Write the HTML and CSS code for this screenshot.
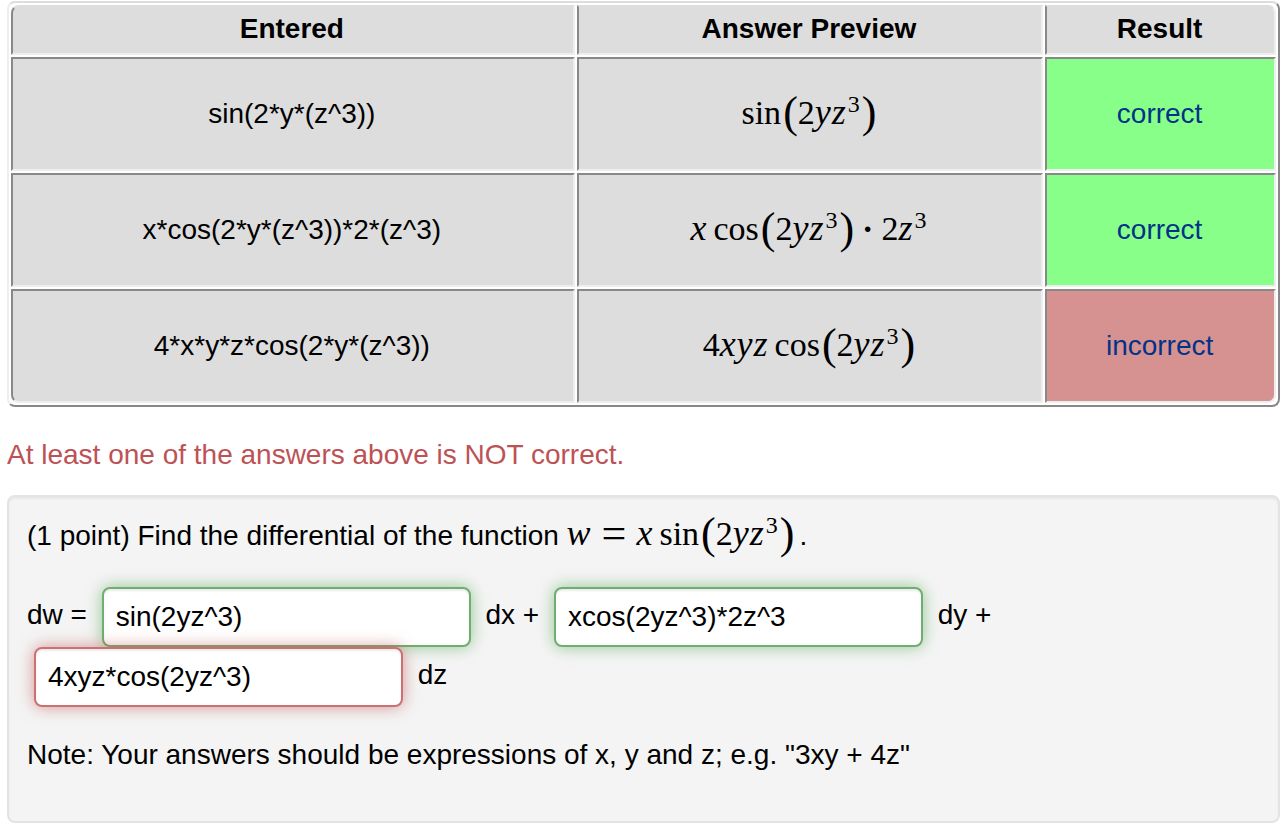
FILE: index.html
```html
<!DOCTYPE html>
<html lang="en">
<head>
<meta charset="utf-8">
<meta name="viewport" content="width=device-width,initial-scale=1.0">
<title>Differential of a function</title>
<link rel="stylesheet" href="styles.css">
</head>
<body>

<table class="results">
	<colgroup>
		<col class="col-entered">
		<col class="col-preview">
		<col class="col-result">
	</colgroup>
	<thead>
		<tr>
			<th scope="col">Entered</th>
			<th scope="col">Answer Preview</th>
			<th scope="col">Result</th>
		</tr>
	</thead>
	<tbody>
		<tr>
			<td>sin(2*y*(z^3))</td>
			<td><span class="math"><span class="fn">sin</span><span class="paren">(</span>2<i>y</i><i>z</i><sup>3</sup><span class="paren">)</span></span></td>
			<td class="correct"><a href="#answer1">correct</a></td>
		</tr>
		<tr>
			<td>x*cos(2*y*(z^3))*2*(z^3)</td>
			<td><span class="math"><i>x</i><span class="fn after">cos</span><span class="paren">(</span>2<i>y</i><i>z</i><sup>3</sup><span class="paren">)</span><span class="op">·</span>2<i>z</i><sup>3</sup></span></td>
			<td class="correct"><a href="#answer2">correct</a></td>
		</tr>
		<tr>
			<td>4*x*y*z*cos(2*y*(z^3))</td>
			<td><span class="math">4<i>x</i><i>y</i><i>z</i><span class="fn after">cos</span><span class="paren">(</span>2<i>y</i><i>z</i><sup>3</sup><span class="paren">)</span></span></td>
			<td class="incorrect"><a href="#answer3">incorrect</a></td>
		</tr>
	</tbody>
</table>

<p class="message">At least one of the answers above is NOT correct.</p>

<form class="problem">
	<p>(1 point) Find the differential of the function <span class="math inline"><i>w</i><span class="rel">=</span><i>x</i><span class="fn after">sin</span><span class="paren">(</span>2<i>y</i><i>z</i><sup>3</sup><span class="paren">)</span></span>.</p>
	<p class="answers">
		<label for="answer1">dw =</label>
		<input type="text" id="answer1" class="ok" value="sin(2yz^3)">
		<label for="answer2">dx +</label>
		<input type="text" id="answer2" class="ok" value="xcos(2yz^3)*2z^3">
		<label for="answer3">dy +</label>
		<input type="text" id="answer3" class="bad" value="4xyz*cos(2yz^3)">
		dz
	</p>
	<p>Note: Your answers should be expressions of x, y and z; e.g. "3xy + 4z"</p>
</form>

</body>
</html>
```
FILE: styles.css
```css
body{
	margin:1px 8px 0 7px;
	background:#fff;
	color:#000;
	font-family:"Liberation Sans", Arial, sans-serif;
	font-size:28px;
	line-height:40px;
}
p{
	margin:0;
}

/* results table */
.results{
	width:100%;
	table-layout:fixed;
	border:2px solid;
	border-color:#ddd #888 #888 #eee;
	border-radius:8px;
	border-spacing:2px;
	text-align:center;
}
.col-entered{
	width:44.7%;
}
.col-preview{
	width:37%;
}
.results th,
.results td{
	box-sizing:border-box;
	padding:0 10px 0 8px;
	background:#ddd;
	border:2px solid;
	border-color:#888 #eee #eee #888;
}
.results th{
	height:50px;
	padding-bottom:2px;
	border-top-color:#ddd;
}
.results td{
	height:114px;
}
.results th:first-child{
	border-top-left-radius:8px;
}
.results th:last-child{
	border-top-right-radius:8px;
}
.results tr:last-child td:first-child{
	border-bottom-left-radius:8px;
}
.results tr:last-child td:last-child{
	border-bottom-right-radius:8px;
}
.results .correct{
	background:#8f8;
}
.results .incorrect{
	background:#d69191;
}
.results a{
	color:#038;
	text-decoration:none;
}

/* formulas */
.math{
	font-family:"Liberation Serif", "Times New Roman", serif;
	font-size:34px;
	line-height:1;
	white-space:nowrap;
}
.math.inline{
	line-height:0;
	margin-right:5px;
}
.math i{
	font-size:36px;
	margin-right:1px;
}
.math sup{
	font-size:24px;
	line-height:0;
	vertical-align:12px;
	margin:0 1px;
}
.math .fn{
	margin-right:1px;
}
.math .paren{
	font-size:44px;
	line-height:0;
	vertical-align:-3px;
	margin-left:1px;
}
.math .after{
	margin-left:6px;
}
.math .op{
	margin:0 8px;
	font-weight:bold;
}
.math .rel{
	margin:0 10px;
	font-size:44px;
	line-height:0;
	vertical-align:-3px;
}

.message{
	margin:28px 0 20px;
	color:#bd5255;
}

/* problem box */
.problem{
	padding:19px 18px 46px;
	background:#f4f4f4;
	border:2px solid #e3e3e3;
	border-radius:8px;
	box-shadow:inset 0 2px 2px rgba(0,0,0,0.05);
}
.answers{
	margin:31px 0 28px;
}
.answers input{
	box-sizing:border-box;
	width:369px;
	height:60px;
	margin:0 7px;
	padding:8px 12px;
	background:#fff;
	border:2px solid;
	border-radius:8px;
	color:#000;
	font:inherit;
	vertical-align:middle;
}
.answers .ok{
	border-color:#70ad70;
	box-shadow:inset 0 2px 2px rgba(0,0,0,0.075), 0 0 16px rgba(81,163,81,0.6);
}
.answers .bad{
	border-color:#cf7070;
	box-shadow:inset 0 2px 2px rgba(0,0,0,0.075), 0 0 16px rgba(191,84,84,0.6);
}
```
